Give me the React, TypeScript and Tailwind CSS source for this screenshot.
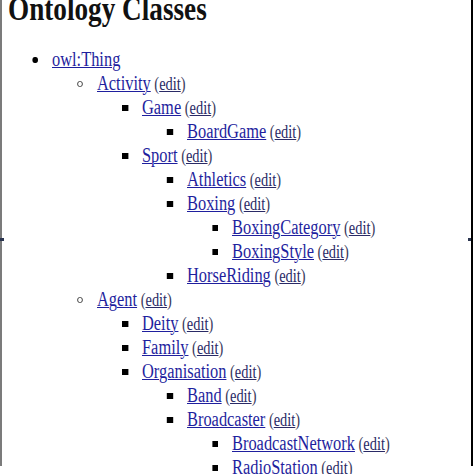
import React from "react";

type Node = { name: string; edit?: boolean; children?: Node[] };

const tree: Node = {
  name: "owl:Thing",
  children: [
    {
      name: "Activity",
      edit: true,
      children: [
        { name: "Game", edit: true, children: [{ name: "BoardGame", edit: true }] },
        {
          name: "Sport",
          edit: true,
          children: [
            { name: "Athletics", edit: true },
            {
              name: "Boxing",
              edit: true,
              children: [
                { name: "BoxingCategory", edit: true },
                { name: "BoxingStyle", edit: true },
              ],
            },
            { name: "HorseRiding", edit: true },
          ],
        },
      ],
    },
    {
      name: "Agent",
      edit: true,
      children: [
        { name: "Deity", edit: true },
        { name: "Family", edit: true },
        {
          name: "Organisation",
          edit: true,
          children: [
            { name: "Band", edit: true },
            {
              name: "Broadcaster",
              edit: true,
              children: [
                { name: "BroadcastNetwork", edit: true },
                { name: "RadioStation", edit: true },
              ],
            },
          ],
        },
      ],
    },
  ],
};

function Bullet({ depth }: { depth: number }) {
  if (depth === 0)
    return <span className="mt-[10px] block h-[6px] w-[7.5px] shrink-0 rounded-full bg-black" />;
  if (depth === 1)
    return (
      <span className="mt-[10px] block h-[6px] w-[7.5px] shrink-0 rounded-full border-[1.3px] border-[#333]" />
    );
  return <span className="mt-[10px] block h-[6px] w-[7.5px] shrink-0 bg-black" />;
}

function Item({ node, depth }: { node: Node; depth: number }) {
  return (
    <li>
      <div className="flex h-6 items-start">
        <Bullet depth={depth} />
        <div className="ml-[17.5px] whitespace-nowrap leading-6">
          <a className="text-[20.5px] text-[#1f1f9e] underline decoration-1">{node.name}</a>
          {node.edit && (
            <span className="text-[18px] text-[#3a3a5c]">
              {" "}(<a className="underline decoration-1 text-[#2a2a66]">edit</a>)
            </span>
          )}
        </div>
      </div>
      {node.children && (
        <ul className="pl-[56.25px]">
          {node.children.map((c) => (
            <Item key={c.name} node={c} depth={depth + 1} />
          ))}
        </ul>
      )}
    </li>
  );
}

export default function App() {
  return (
    <div className="relative h-[474px] w-[474px] overflow-hidden bg-white pr-px">
      <div className="h-full w-full border-l-2 border-r-2 border-l-[#7b7b7b] border-r-black">
        <div
          className="w-[580px] origin-top-left scale-x-80 text-black"
          style={{ fontFamily: '"Liberation Serif", "Times New Roman", serif' }}
        >
          <h1 className="ml-[7.5px] mt-[-8px] text-[34px] font-bold leading-[34px] text-[#111]">
            Ontology Classes
          </h1>
          <ul className="mt-[21px] pl-[37.5px]">
            <Item node={tree} depth={0} />
          </ul>
        </div>
      </div>
      <span className="absolute left-0 top-[238px] h-[3px] w-[4px] bg-[#2b3550]" />
      <span className="absolute right-[3px] top-[238px] h-[3px] w-[3px] bg-[#2b3550]" />
    </div>
  );
}
